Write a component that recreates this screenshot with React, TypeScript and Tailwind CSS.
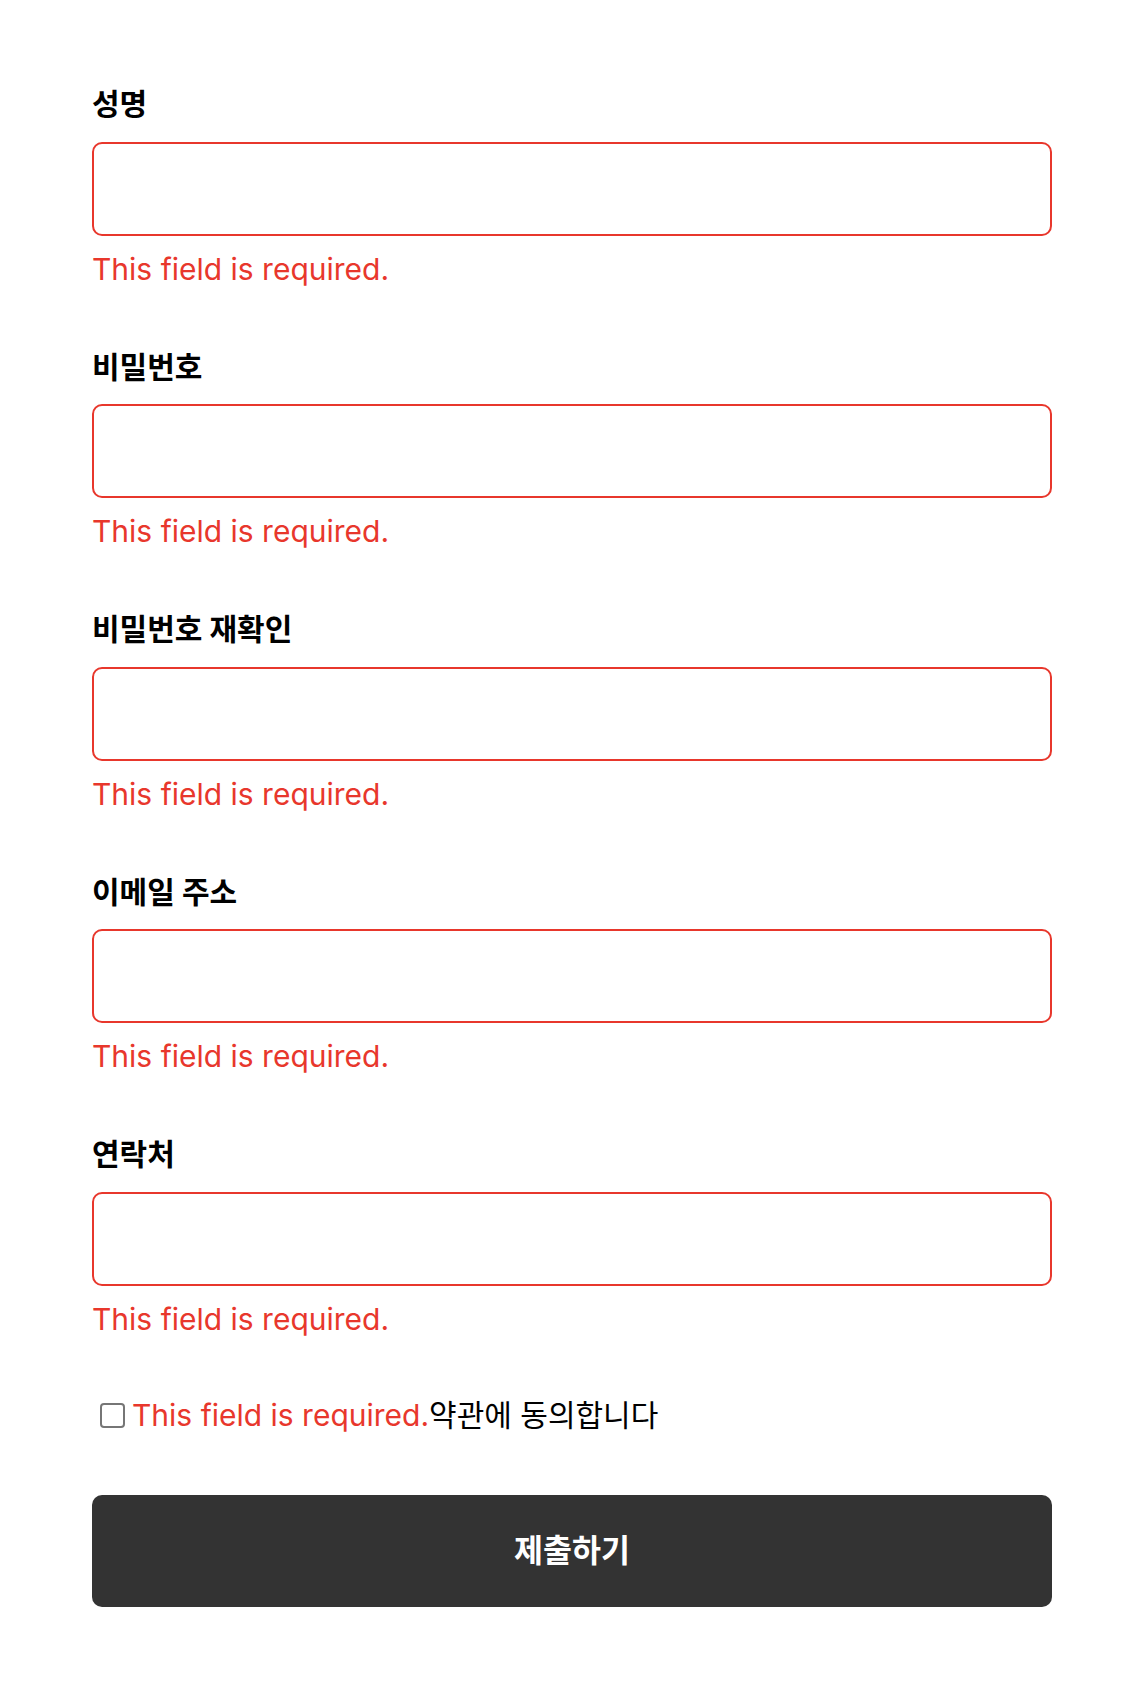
import React from "react";

const fields = ["성명", "비밀번호", "비밀번호 재확인", "이메일 주소", "연락처"];

export default function App() {
  return (
    <div
      className="min-h-[1706px] bg-white text-black"
      style={{ fontFamily: 'Inter, "Noto Sans CJK KR", "Noto Sans", sans-serif' }}
    >
      <form className="mx-auto w-[960px] pt-[82px]">
        {fields.map((f) => (
          <div key={f} className="mb-[53px]">
            <label className="block text-[30px] leading-[45px] font-bold text-black">{f}</label>
            <input
              type="text"
              className="mt-[14.5px] block h-[94px] w-full rounded-[10px] border-2 border-[#e8372c] bg-white px-[22px] text-[30px] outline-none"
            />
            <p className="mt-[11px] text-[30px] leading-[45px] text-[#e8372c]">This field is required.</p>
          </div>
        ))}
        <label className="mt-[-2px] flex items-center text-[30px] leading-[45px]">
          <input
            type="checkbox"
            className="ml-[8px] h-[25px] w-[25px] shrink-0 appearance-none rounded-[4px] border-2 border-[#767676] bg-white"
          />
          <span className="ml-[7px] text-[#e8372c]">This field is required.</span>
          <span className="text-black">약관에 동의합니다</span>
        </label>
        <button
          type="button"
          className="mt-[57px] flex h-[112px] w-full items-center justify-center rounded-[10px] bg-[#333333] text-[31.5px] font-bold text-white"
        >
          제출하기
        </button>
      </form>
    </div>
  );
}
